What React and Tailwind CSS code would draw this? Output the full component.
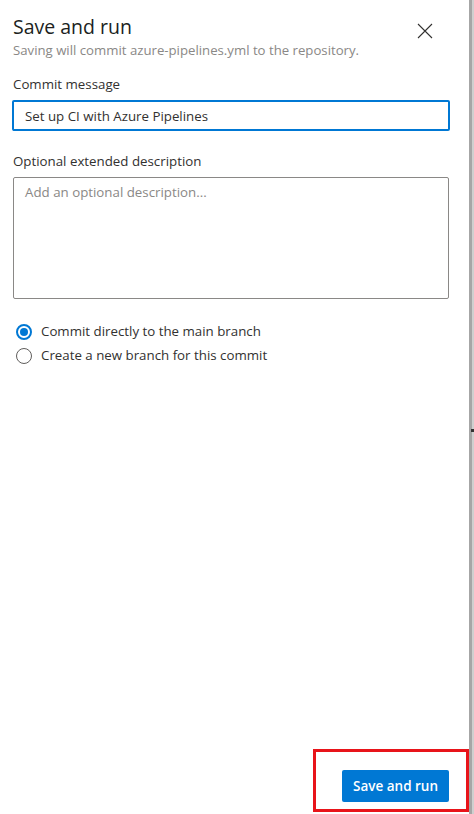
import React from 'react';

const font = { fontFamily: '"Segoe UI", "Open Sans", "Noto Sans", sans-serif' };

const Radio = ({ checked, label }) => (
  <label className="flex items-center gap-[9px] h-6 text-[13.3px] text-[#323130]">
    {checked ? (
      <span className="w-4 h-4 rounded-full border-2 border-[#0078d4] flex items-center justify-center">
        <span className="w-[8px] h-[8px] rounded-full bg-[#0078d4]" />
      </span>
    ) : (
      <span className="w-4 h-4 rounded-full border border-[#605e5c]" />
    )}
    <span>{label}</span>
  </label>
);

const App = () => {
  return (
    <div className="w-[474px] h-[814px] flex bg-white" style={font}>
      <div className="flex-1 flex flex-col relative">
        {/* header */}
        <div className="flex items-start justify-between pl-[13px] pr-[34px] pt-[13px]">
          <div>
            <h1 className="text-[19.5px] leading-[28px] text-[#201f1e]">Save and run</h1>
            <p className="text-[13.2px] leading-[18px] text-[#8a8886]">
              Saving will commit azure-pipelines.yml to the repository.
            </p>
          </div>
          <button className="mt-[8px] w-5 h-5 flex items-center justify-center text-[#323130]">
            <svg width="16" height="16" viewBox="0 0 16 16" fill="none" stroke="currentColor" strokeWidth="1.1">
              <path d="M1 1L15 15M15 1L1 15" />
            </svg>
          </button>
        </div>

        {/* form */}
        <div className="px-[12px] pr-[19px] mt-[15px]">
          <div className="text-[13.3px] leading-[20px] text-[#323130] pl-[1px]">Commit message</div>
          <input
            className="mt-[6px] w-full h-[31px] border-2 border-[#0078d4] rounded-[2px] px-[11px] text-[13.3px] text-[#323130] outline-none"
            defaultValue="Set up CI with Azure Pipelines"
          />

          <div className="mt-[20px] text-[13.3px] leading-[20px] text-[#323130] pl-[1px]">
            Optional extended description
          </div>
          <textarea
            className="mt-[6px] ml-[1px] w-[436px] h-[122px] border border-[#8a8886] rounded-[2px] px-[11px] py-[5px] text-[13.3px] text-[#323130] placeholder-[#8a8886] outline-none resize-none block"
            placeholder="Add an optional description..."
          />

          <div className="mt-[21px] pl-[4px] flex flex-col">
            <Radio checked label="Commit directly to the main branch" />
            <Radio label="Create a new branch for this commit" />
          </div>
        </div>

        {/* footer */}
        <div className="mt-auto flex justify-end pr-[20px] pb-[12px]">
          <button className="h-[32px] w-[107px] rounded-[2px] bg-[#0078d4] text-white text-[13.5px] font-semibold">
            Save and run
          </button>
        </div>
        <div className="absolute left-[313px] top-[749px] w-[156px] h-[63px] border-[3px] border-[#e8141a] pointer-events-none" />
      </div>

      {/* right edge */}
      <div className="w-[5px] flex relative">
        <div className="w-[3px] bg-[#a6a6a6]" />
        <div className="w-[2px] bg-[#cfcfcf]" />
        <div className="absolute right-0 top-[429px] w-[3px] h-[3px] bg-[#333333]" />
      </div>
    </div>
  );
};

export default App;
